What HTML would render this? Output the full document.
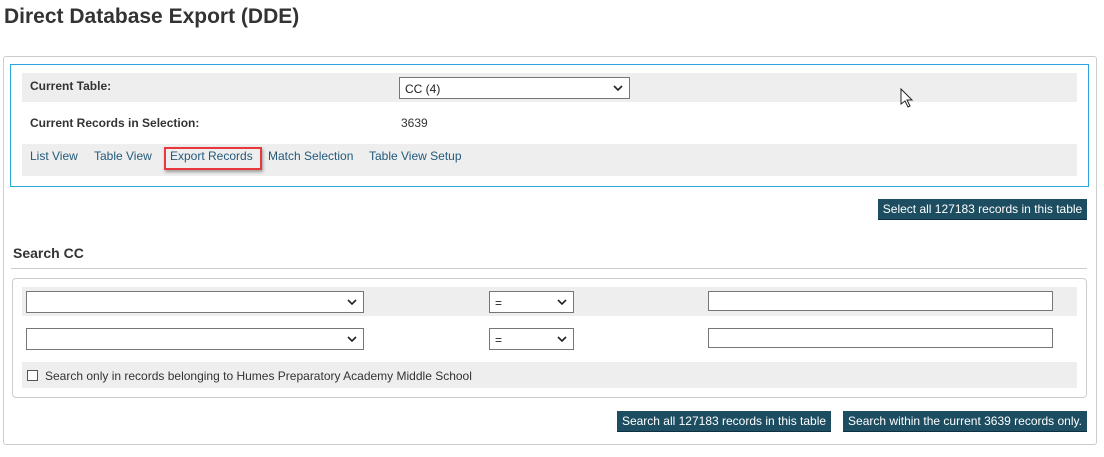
<!DOCTYPE html>
<html><head><style>
*{box-sizing:border-box;margin:0;padding:0}
body{width:1104px;height:457px;background:#fff;font-family:"Liberation Sans",Arial,sans-serif;color:#333;position:relative;overflow:hidden;font-size:12px}
.a{position:absolute}
.sel{position:absolute;border:1px solid #767676;background:#fff;height:22px;font-size:12px;padding:4px 5px;color:#222}
.sel svg{position:absolute;right:6px;top:7px}
.inp{position:absolute;border:1px solid #767676;background:#fff;height:20px}
.gray{position:absolute;background:#eee}
.btn{position:absolute;background:#1d4d61;color:#fff;font-size:12px;height:21px;line-height:21px;text-align:center;border-bottom:1px solid #0f3040}
.lnk{position:absolute;color:#235a7a;top:149px}
</style></head><body>
<div class="a" style="left:4px;top:5px;font-size:21px;font-weight:bold;color:#333">Direct Database Export (DDE)</div>
<div class="a" style="left:3px;top:56px;width:1094px;height:389px;border:1px solid #ccc;border-radius:3px"></div>
<div class="a" style="left:10px;top:64px;width:1079px;height:123px;border:1px solid #29a8df"></div>
<div class="gray" style="left:22px;top:73px;width:1055px;height:29px"></div>
<div class="a" style="left:30px;top:79px;font-weight:bold">Current Table:</div>
<div class="sel" style="left:399px;top:77px;width:231px">CC (4)<svg width="10" height="7" viewBox="0 0 10 7"><path d="M1 1l4 4 4-4" stroke="#222" stroke-width="1.6" fill="none"/></svg></div>
<div class="a" style="left:30px;top:116px;font-weight:bold">Current Records in Selection:</div>
<div class="a" style="left:401px;top:116px">3639</div>
<div class="gray" style="left:22px;top:144px;width:1055px;height:32px"></div>
<div class="lnk" style="left:30px">List View</div>
<div class="lnk" style="left:94px">Table View</div>
<div class="a" style="left:164px;top:147px;width:98px;height:23px;border:2px solid #e8383d;box-shadow:1px 2px 3px rgba(0,0,0,.35)"></div>
<div class="lnk" style="left:170px">Export Records</div>
<div class="lnk" style="left:268px">Match Selection</div>
<div class="lnk" style="left:369px">Table View Setup</div>
<svg class="a" style="left:900px;top:88px" width="16" height="20" viewBox="0 0 16 20"><path d="M1 1v15l4-3 3 6 2-1-3-6h5z" fill="#fff" stroke="#222" stroke-width="1"/></svg>
<div class="btn" style="left:878px;top:199px;width:209px">Select all 127183 records in this table</div>
<div class="a" style="left:13px;top:245px;font-size:14px;font-weight:bold">Search CC</div>
<div class="a" style="left:11px;top:268px;width:1076px;height:1px;background:#ccc"></div>
<div class="a" style="left:12px;top:278px;width:1075px;height:120px;border:1px solid #ccc;border-radius:4px"></div>
<div class="gray" style="left:22px;top:287px;width:1055px;height:29px"></div>
<div class="sel" style="left:26px;top:291px;width:338px"><svg width="10" height="7" viewBox="0 0 10 7"><path d="M1 1l4 4 4-4" stroke="#222" stroke-width="1.6" fill="none"/></svg></div>
<div class="sel" style="left:489px;top:291px;width:85px">=<svg width="10" height="7" viewBox="0 0 10 7"><path d="M1 1l4 4 4-4" stroke="#222" stroke-width="1.6" fill="none"/></svg></div>
<div class="inp" style="left:708px;top:291px;width:345px"></div>
<div class="sel" style="left:26px;top:328px;width:338px"><svg width="10" height="7" viewBox="0 0 10 7"><path d="M1 1l4 4 4-4" stroke="#222" stroke-width="1.6" fill="none"/></svg></div>
<div class="sel" style="left:489px;top:328px;width:85px">=<svg width="10" height="7" viewBox="0 0 10 7"><path d="M1 1l4 4 4-4" stroke="#222" stroke-width="1.6" fill="none"/></svg></div>
<div class="inp" style="left:708px;top:328px;width:345px"></div>
<div class="gray" style="left:22px;top:362px;width:1055px;height:26px"></div>
<div class="a" style="left:27px;top:370px;width:11px;height:11px;border:1px solid #555;background:#fff"></div>
<div class="a" style="left:45px;top:369px">Search only in records belonging to Humes Preparatory Academy Middle School</div>
<div class="btn" style="left:617px;top:411px;width:214px">Search all 127183 records in this table</div>
<div class="btn" style="left:843px;top:411px;width:244px">Search within the current 3639 records only.</div>
</body></html>
